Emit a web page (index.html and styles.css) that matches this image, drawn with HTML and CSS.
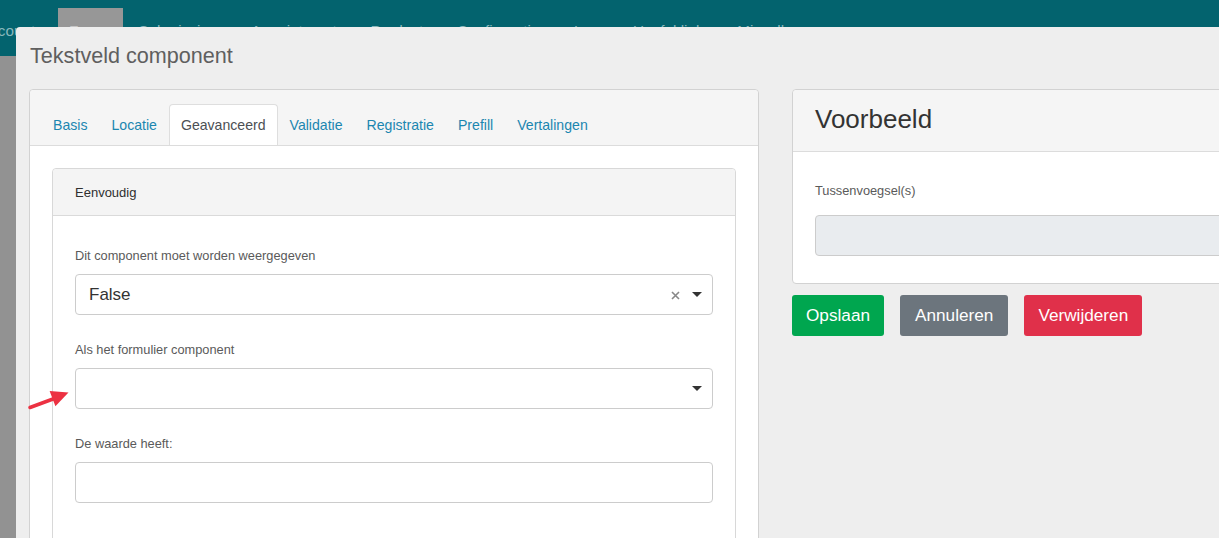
FILE: index.html
```html
<!DOCTYPE html>
<html lang="nl">
<head>
<meta charset="utf-8">
<title>Tekstveld component</title>
<link rel="stylesheet" href="styles.css">
</head>
<body>
<header class="navbar">
  <ul class="nav-list">
    <li class="nav-item">Accounts</li>
    <li class="nav-item active">Forms</li>
    <li class="nav-item">Submissions</li>
    <li class="nav-item">Appointments</li>
    <li class="nav-item">Products</li>
    <li class="nav-item">Configuration</li>
    <li class="nav-item">Logs</li>
    <li class="nav-item">Useful links</li>
    <li class="nav-item">Miscellaneous</li>
  </ul>
</header>

<div class="modal">
  <h2 class="modal-title">Tekstveld component</h2>
  <div class="modal-row">
    <section class="card edit-card">
      <div class="tabs-header">
        <nav class="tabs">
          <a class="tab">Basis</a>
          <a class="tab">Locatie</a>
          <a class="tab active">Geavanceerd</a>
          <a class="tab">Validatie</a>
          <a class="tab">Registratie</a>
          <a class="tab">Prefill</a>
          <a class="tab">Vertalingen</a>
        </nav>
      </div>
      <div class="edit-body">
        <div class="inner-card">
          <div class="inner-header">Eenvoudig</div>
          <div class="inner-body">
            <div class="form-group">
              <label class="field-label">Dit component moet worden weergegeven</label>
              <div class="select">
                <span class="select-value">False</span>
                <svg class="select-clear" width="9" height="9" viewBox="0 0 9 9"><path d="M1 1L8 8M8 1L1 8" stroke="#888" stroke-width="1.6" fill="none"/></svg>
                <span class="select-arrow"></span>
              </div>
            </div>
            <div class="form-group">
              <label class="field-label">Als het formulier component</label>
              <div class="select">
                <span class="select-value"></span>
                <span class="select-arrow"></span>
              </div>
            </div>
            <div class="form-group">
              <label class="field-label">De waarde heeft:</label>
              <div class="text-input"></div>
            </div>
          </div>
        </div>
      </div>
    </section>

    <div class="preview-col">
      <section class="card preview-card">
        <div class="preview-header">Voorbeeld</div>
        <div class="preview-body">
          <label class="field-label preview-label">Tussenvoegsel(s)</label>
          <div class="text-input disabled"></div>
        </div>
      </section>
      <div class="actions">
        <button class="btn btn-save">Opslaan</button>
        <button class="btn btn-cancel">Annuleren</button>
        <button class="btn btn-delete">Verwijderen</button>
      </div>
    </div>
  </div>
</div>

<svg class="annotation-arrow" width="46" height="26" viewBox="0 0 46 26">
  <path d="M4 21.5L29 12.3" stroke="#ec3142" stroke-width="3.6" stroke-linecap="round" fill="none"/>
  <polygon points="42.5,6.5 23.6,5 29.4,20.2" fill="#ec3142"/>
</svg>
</body>
</html>
```

FILE: styles.css
```css
* {
  box-sizing: border-box;
}

html, body {
  margin: 0;
  padding: 0;
}

body {
  width: 1219px;
  height: 538px;
  overflow: hidden;
  position: relative;
  background: #929292;
  font-family: "Liberation Sans", Arial, sans-serif;
  color: #333;
}

/* background navbar */
.navbar {
  height: 56px;
  background: #03636e;
}

.nav-list {
  display: flex;
  gap: 4px;
  margin: 0 0 0 -31px;
  padding: 0;
  list-style: none;
}

.nav-item {
  margin-top: 8px;
  height: 48px;
  padding: 14px 11px 0;
  font-size: 15.3px;
  line-height: 18px;
  color: #8ab8bd;
  white-space: nowrap;
}

.nav-item.active {
  background: #979797;
  color: #c6c6c6;
}

/* modal */
.modal {
  position: absolute;
  left: 16px;
  top: 27px;
  width: 1320px;
  height: 560px;
  background: #eeeeee;
  border-top-left-radius: 4px;
  padding: 0 13px;
}

.modal-title {
  margin: 0;
  padding: 16px 1px 0;
  font-size: 21.6px;
  line-height: 26px;
  font-weight: normal;
  color: #5f5f5f;
}

.modal-row {
  display: flex;
  align-items: flex-start;
  gap: 33px;
  margin-top: 20px;
}

.card {
  background: #fff;
  border: 1px solid #d2d2d2;
  border-radius: 4px;
}

.edit-card {
  width: 730px;
  flex: none;
  height: 500px;
}

.tabs-header {
  background: #f5f5f5;
  border-bottom: 1px solid #dcdcdc;
  border-radius: 4px 4px 0 0;
  padding: 14px 11px 0;
}

.tabs {
  display: flex;
}

.tab {
  padding: 11px 11px 10px;
  border: 1px solid transparent;
  border-bottom: 0;
  border-radius: 4px 4px 0 0;
  font-size: 14.1px;
  line-height: 19px;
  color: #1b86b0;
}

.tab.active {
  background: #fff;
  border-color: #dedede;
  color: #4c4f54;
}

.edit-body {
  padding: 22px;
}

.inner-card {
  border: 1px solid #d8d8d8;
  border-radius: 4px;
  height: 420px;
}

.inner-header {
  background: #f4f4f4;
  border-bottom: 1px solid #dadada;
  border-radius: 4px 4px 0 0;
  padding: 16px 22px 14px;
  font-size: 13px;
  line-height: 16px;
  color: #2f2f2f;
}

.inner-body {
  padding: 30px 22px;
}

.form-group {
  margin-bottom: 25px;
}

.field-label {
  display: block;
  font-size: 12.8px;
  line-height: 19px;
  color: #5a5a5a;
  margin-bottom: 9px;
}

.select {
  display: flex;
  align-items: center;
  height: 41px;
  border: 1px solid #cccccc;
  border-radius: 4px;
  padding: 0 10px 0 13px;
  background: #fff;
}

.select-value {
  flex: 1;
  font-size: 17px;
  color: #333;
}

.select-clear {
  margin-right: 12px;
  margin-top: 1px;
}

.select-arrow {
  width: 0;
  height: 0;
  border-left: 5px solid transparent;
  border-right: 5px solid transparent;
  border-top: 5px solid #333;
}

.text-input {
  height: 41px;
  border: 1px solid #cccccc;
  border-radius: 4px;
  background: #fff;
}

.text-input.disabled {
  background: #e9ecef;
}

/* preview column */
.preview-col {
  flex: 1;
}

.preview-header {
  background: #f5f5f5;
  border-bottom: 1px solid #dcdcdc;
  border-radius: 4px 4px 0 0;
  padding: 15px 22px 18px;
  font-size: 26px;
  line-height: 28px;
  color: #333;
}

.preview-body {
  padding: 29px 22px 27px;
}

.preview-label {
  margin-bottom: 15px;
}

.actions {
  display: flex;
  gap: 16px;
  margin-top: 11px;
}

.btn {
  height: 41px;
  padding: 0 14px;
  border: none;
  border-radius: 3px;
  font-family: "Liberation Sans", Arial, sans-serif;
  font-size: 17.2px;
  color: #fff;
}

.btn-save {
  background: #00a64f;
}

.btn-cancel {
  background: #6c757d;
  padding: 0 15px;
}

.btn-delete {
  background: #e0304a;
}

/* red annotation arrow drawn over the screenshot */
.annotation-arrow {
  position: absolute;
  left: 26px;
  top: 386px;
}
```
